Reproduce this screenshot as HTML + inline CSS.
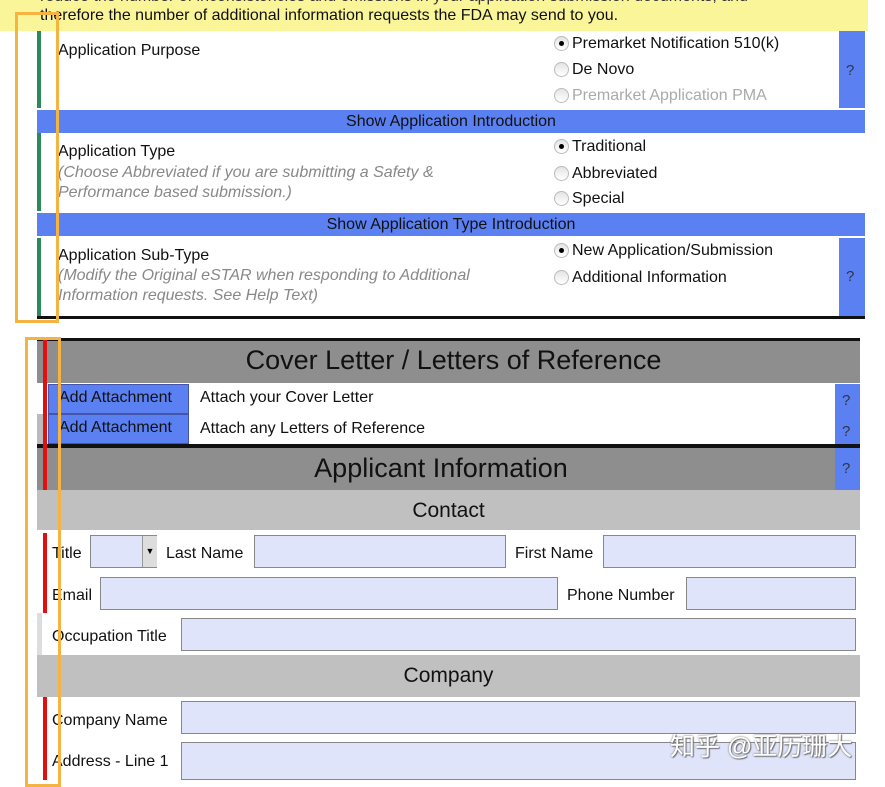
<!DOCTYPE html>
<html><head><meta charset="utf-8"><style>
body{margin:0;width:885px;height:780px;overflow:hidden;background:#fff;font-family:"Liberation Sans",Arial,sans-serif;position:relative}
.a{position:absolute}
.t{position:absolute;white-space:nowrap;font-size:16px;color:#111}
.i{position:absolute;white-space:nowrap;font-size:16px;color:#888;font-style:italic}
.blue{background:#5b80f2}
.rad{position:absolute;width:15px;height:15px;border-radius:50%;border:1px solid #bbb;background:linear-gradient(#e4e4e4,#fff);box-sizing:border-box}
.rad.on::after{content:"";position:absolute;left:4px;top:4px;width:5px;height:5px;border-radius:50%;background:#000}
.q{position:absolute;color:#334;font-size:15px}
.inp{position:absolute;background:#dfe4fb;border:1px solid #888;box-sizing:border-box}
.btn{position:absolute;background:#5b80f2;border:1px solid #4455aa;box-sizing:border-box;font-size:16px;color:#111;padding:4px 0 0 10px}
</style></head><body>
<div class="a" style="left:0;top:0;width:868px;height:31px;background:#fbf59a"></div>
<div class="t" style="left:40px;top:-12px;color:#333">reduce the number of inconsistencies and omissions in your application submission documents, and</div>
<div class="t" style="left:40px;top:7px">therefore the number of additional information requests the FDA may send to you.</div>
<!-- row1 -->
<div class="a" style="left:37px;top:31px;width:4px;height:77px;background:#2a8a5a"></div>
<div class="a blue" style="left:839px;top:31px;width:26px;height:77px"></div>
<div class="q" style="left:846px;top:62px">?</div>
<div class="t" style="left:58px;top:42px">Application Purpose</div>
<div class="rad on" style="left:554px;top:36px"></div><div class="t" style="left:572px;top:35px">Premarket Notification 510(k)</div>
<div class="rad" style="left:554px;top:62px"></div><div class="t" style="left:572px;top:61px">De Novo</div>
<div class="rad" style="left:554px;top:88px"></div><div class="t" style="left:572px;top:87px;color:#aaa">Premarket Application PMA</div>
<div class="a blue" style="left:37px;top:110px;width:828px;height:23px"></div>
<div class="t" style="left:37px;width:828px;text-align:center;top:113px">Show Application Introduction</div>
<!-- row2 -->
<div class="a" style="left:37px;top:133px;width:4px;height:78px;background:#2a8a5a"></div>
<div class="t" style="left:58px;top:143px">Application Type</div>
<div class="i" style="left:58px;top:164px">(Choose Abbreviated if you are submitting a Safety &amp;</div>
<div class="i" style="left:58px;top:184px">Performance based submission.)</div>
<div class="rad on" style="left:554px;top:139px"></div><div class="t" style="left:572px;top:138px">Traditional</div>
<div class="rad" style="left:554px;top:166px"></div><div class="t" style="left:572px;top:165px">Abbreviated</div>
<div class="rad" style="left:554px;top:191px"></div><div class="t" style="left:572px;top:190px">Special</div>
<div class="a blue" style="left:37px;top:213px;width:828px;height:23px"></div>
<div class="t" style="left:37px;width:828px;text-align:center;top:216px">Show Application Type Introduction</div>
<!-- row3 -->
<div class="a" style="left:37px;top:238px;width:4px;height:79px;background:#2a8a5a"></div>
<div class="a blue" style="left:839px;top:238px;width:26px;height:79px"></div>
<div class="q" style="left:846px;top:268px">?</div>
<div class="t" style="left:58px;top:247px">Application Sub-Type</div>
<div class="i" style="left:58px;top:267px">(Modify the Original eSTAR when responding to Additional</div>
<div class="i" style="left:58px;top:287px">Information requests. See Help Text)</div>
<div class="rad on" style="left:554px;top:243px"></div><div class="t" style="left:572px;top:242px">New Application/Submission</div>
<div class="rad" style="left:554px;top:270px"></div><div class="t" style="left:572px;top:269px">Additional Information</div>
<div class="a" style="left:37px;top:316px;width:828px;height:3px;background:#111"></div>
<!-- cover -->
<div class="a" style="left:37px;top:338px;width:823px;height:3px;background:#111"></div>
<div class="a" style="left:37px;top:341px;width:823px;height:42px;background:#8e8e8e"></div>
<div class="t" style="left:37px;width:833px;text-align:center;top:345px;font-size:27px">Cover Letter / Letters of Reference</div>
<div class="a" style="left:37px;top:414px;width:10px;height:30px;background:#bbb"></div>
<div class="btn" style="left:48px;top:384px;width:141px;height:30px">Add Attachment</div>
<div class="btn" style="left:48px;top:414px;width:141px;height:30px">Add Attachment</div>
<div class="t" style="left:200px;top:389px">Attach your Cover Letter</div>
<div class="t" style="left:200px;top:420px">Attach any Letters of Reference</div>
<div class="a blue" style="left:835px;top:384px;width:25px;height:60px"></div>
<div class="q" style="left:842px;top:392px">?</div><div class="q" style="left:842px;top:423px">?</div>
<div class="a" style="left:37px;top:444px;width:823px;height:4px;background:#111"></div>
<div class="a" style="left:37px;top:448px;width:823px;height:42px;background:#8e8e8e"></div>
<div class="a blue" style="left:835px;top:448px;width:25px;height:42px"></div>
<div class="q" style="left:842px;top:460px">?</div>
<div class="t" style="left:37px;width:808px;text-align:center;top:453px;font-size:27px">Applicant Information</div>
<div class="a" style="left:43px;top:340px;width:4px;height:150px;background:#e01010"></div>
<div class="a" style="left:37px;top:490px;width:823px;height:40px;background:#c0c0c0"></div>
<div class="t" style="left:37px;width:823px;text-align:center;top:499px;font-size:21px">Contact</div>
<div class="a" style="left:43px;top:533px;width:4px;height:80px;background:#e01010"></div>
<div class="t" style="left:52px;top:545px">Title</div>
<div class="inp" style="left:90px;top:535px;width:67px;height:33px"></div>
<div class="a" style="left:142px;top:536px;width:14px;height:31px;background:#ddd;border-left:1px solid #999;font-size:9px;text-align:center;line-height:31px">▼</div>
<div class="t" style="left:166px;top:545px">Last Name</div>
<div class="inp" style="left:254px;top:535px;width:252px;height:33px"></div>
<div class="t" style="left:515px;top:545px">First Name</div>
<div class="inp" style="left:603px;top:535px;width:253px;height:33px"></div>
<div class="t" style="left:52px;top:587px">Email</div>
<div class="inp" style="left:100px;top:577px;width:458px;height:33px"></div>
<div class="t" style="left:567px;top:587px">Phone Number</div>
<div class="inp" style="left:686px;top:577px;width:170px;height:33px"></div>
<div class="a" style="left:37px;top:613px;width:5px;height:42px;background:#ddd"></div>
<div class="t" style="left:52px;top:628px">Occupation Title</div>
<div class="inp" style="left:181px;top:618px;width:675px;height:33px"></div>
<div class="a" style="left:37px;top:655px;width:823px;height:42px;background:#c0c0c0"></div>
<div class="t" style="left:37px;width:823px;text-align:center;top:664px;font-size:21px">Company</div>
<div class="a" style="left:43px;top:697px;width:4px;height:83px;background:#e01010"></div>
<div class="t" style="left:52px;top:712px">Company Name</div>
<div class="inp" style="left:181px;top:701px;width:675px;height:33px"></div>
<div class="t" style="left:52px;top:753px">Address - Line 1</div>
<div class="inp" style="left:181px;top:742px;width:675px;height:38px"></div>
<div class="t" style="left:670px;top:727px;font-size:25px;color:#fff;text-shadow:0 0 2px #666,1px 1px 1px #777;font-family:'Liberation Sans','Noto Sans CJK SC',sans-serif">知乎 @亚历珊大</div>
<!-- orange boxes -->
<div class="a" style="left:15px;top:12px;width:44px;height:311px;border:3px solid #f5b341;box-sizing:border-box"></div>
<div class="a" style="left:25px;top:337px;width:36px;height:450px;border:3px solid #f5b341;box-sizing:border-box"></div>
</body></html>
